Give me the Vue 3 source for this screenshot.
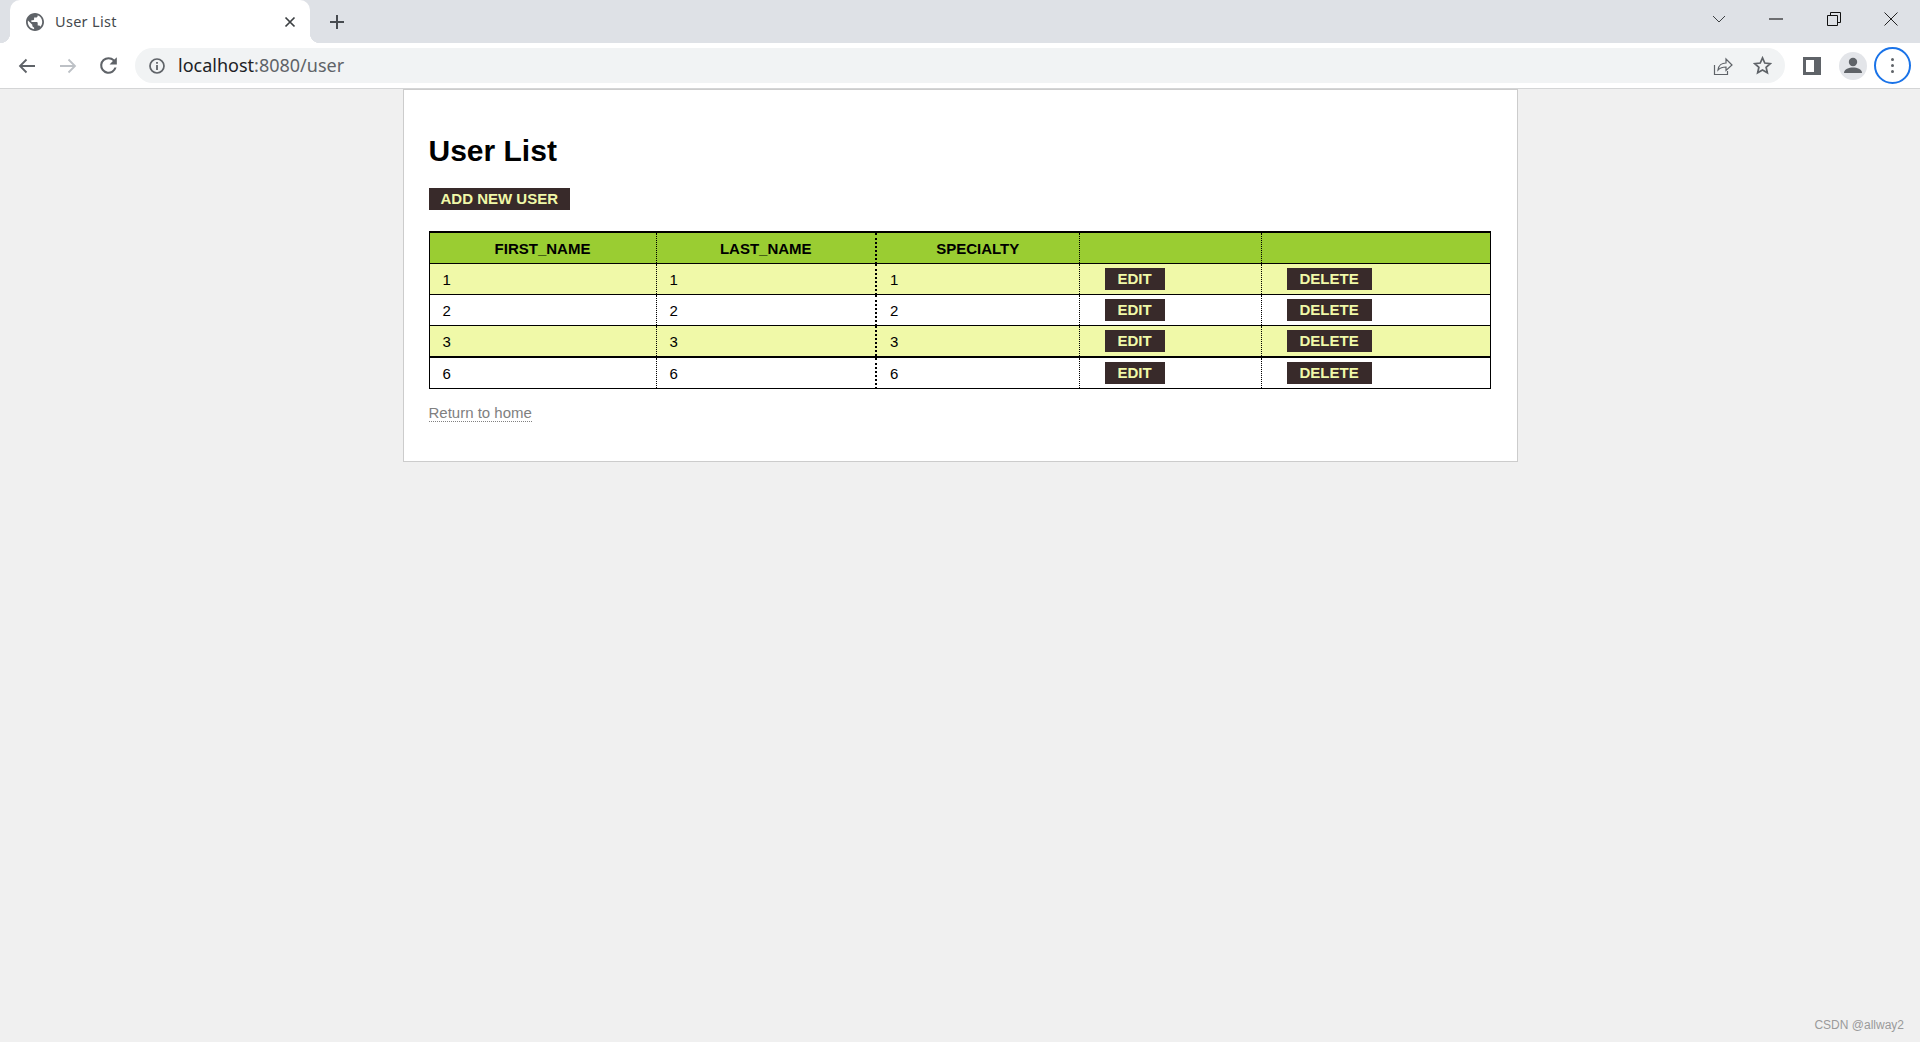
<script setup>
import { ref } from 'vue';

const users = ref([
  { id: 1, firstName: '1', lastName: '1', specialty: '1' },
  { id: 2, firstName: '2', lastName: '2', specialty: '2' },
  { id: 3, firstName: '3', lastName: '3', specialty: '3' },
  { id: 6, firstName: '6', lastName: '6', specialty: '6' }
]);
</script>

<template>
  <div class="page">
    <!-- browser frame -->
    <div class="tabstrip">
      <div class="tab">
        <svg class="favicon" viewBox="2 2 20 20" width="18" height="18">
          <path fill="#5f6368" d="M12 2C6.48 2 2 6.48 2 12s4.48 10 10 10 10-4.48 10-10S17.52 2 12 2zm-1 17.93c-3.95-.49-7-3.85-7-7.93 0-.62.08-1.21.21-1.79L9 15v1c0 1.1.9 2 2 2v1.93zm6.9-2.54c-.26-.81-1-1.39-1.9-1.39h-1v-3c0-.55-.45-1-1-1H8v-2h2c.55 0 1-.45 1-1V7h2c1.1 0 2-.9 2-2v-.41c2.93 1.19 5 4.06 5 7.41 0 2.08-.8 3.97-2.1 5.39z"/>
        </svg>
        <span class="tab-title">User List</span>
        <svg class="tab-close" viewBox="0 0 12 12" width="12" height="12">
          <path d="M1.5 1.5l9 9M10.5 1.5l-9 9" stroke="#3c4043" stroke-width="1.7" fill="none"/>
        </svg>
      </div>
      <svg class="new-tab" viewBox="0 0 16 16" width="16" height="16">
        <path d="M8 1v14M1 8h14" stroke="#474b50" stroke-width="2" fill="none"/>
      </svg>
      <div class="window-controls">
        <div class="win-btn">
          <svg viewBox="0 0 14 8" width="14" height="8"><path d="M1 1l6 6 6-6" stroke="#3c4043" stroke-width="1" fill="none"/></svg>
        </div>
        <div class="win-btn">
          <svg viewBox="0 0 14 2" width="14" height="2"><path d="M0 1h14" stroke="#111" stroke-width="1.1" fill="none"/></svg>
        </div>
        <div class="win-btn">
          <svg viewBox="0 0 14 14" width="14" height="14"><path d="M.5 3.5h10v10H.5zM3.5 3.5V.5h10v10h-3" stroke="#111" stroke-width="1" fill="none"/></svg>
        </div>
        <div class="win-btn">
          <svg viewBox="0 0 14 14" width="14" height="14"><path d="M.5.5l13 13M13.5.5l-13 13" stroke="#222" stroke-width="1" fill="none"/></svg>
        </div>
      </div>
    </div>

    <div class="toolbar">
      <div class="nav-btn back">
        <svg viewBox="0 0 18 16" width="18" height="16"><path d="M17 8H2M8.5 1.5L2 8l6.5 6.5" stroke="#5f6368" stroke-width="1.8" fill="none"/></svg>
      </div>
      <div class="nav-btn">
        <svg viewBox="0 0 18 16" width="18" height="16"><path d="M1 8h15M9.5 1.5L16 8l-6.500 6.500" stroke="#bdc1c6" stroke-width="1.8" fill="none"/></svg>
      </div>
      <div class="nav-btn">
        <svg viewBox="0 0 24 24" width="25" height="25"><path fill="#5f6368" d="M17.65 6.35A7.96 7.96 0 0 0 12 4a8 8 0 1 0 7.73 10h-2.08A6 6 0 1 1 12 6c1.66 0 3.14.69 4.22 1.78L13 11h7V4l-2.35 2.35z"/></svg>
      </div>
      <div class="omnibox">
        <svg class="info" viewBox="0 0 16 16" width="16" height="16">
          <circle cx="8" cy="8" r="7" stroke="#5f6368" stroke-width="1.7" fill="none"/>
          <path d="M8 7v5M8 4v1.8" stroke="#5f6368" stroke-width="1.8" fill="none"/>
        </svg>
        <span class="url"><span class="host">localhost</span>:8080/user</span>
        <svg class="share" viewBox="0 0 20 20" width="20" height="20">
          <path d="M1.5 9v9.5h13V15M5 14c.5-4.500 4-7 8-7V3l6 6-6 5.500V11c-3.500 0-6 1-8 3z" stroke="#5f6368" stroke-width="1.2" fill="none"/>
        </svg>
        <svg class="star" viewBox="0 0 20 20" width="19" height="19">
          <path d="M10 2l2.4 5.400 5.800.6-4.400 3.900 1.300 5.700L10 14.700l-5.100 2.900 1.300-5.700L1.800 8l5.800-.6z" stroke="#5f6368" stroke-width="1.8" fill="none"/>
        </svg>
      </div>
      <svg class="sidebar-icon" viewBox="0 0 18 18" width="18" height="18">
        <path fill="#5f6368" fill-rule="evenodd" d="M0 0h18v18H0zM3 3v12h8V3z"/>
      </svg>
      <div class="avatar">
        <svg viewBox="0 0 20 20" width="20" height="20">
          <circle cx="10" cy="6" r="4.2" fill="#5f6368"/>
          <path fill="#5f6368" d="M1 17c0-4 5-5.500 9-5.500s9 1.500 9 5.500z"/>
        </svg>
      </div>
      <div class="menu-btn">
        <span class="dot"></span><span class="dot"></span><span class="dot"></span>
      </div>
    </div>

    <!-- page content -->
    <div class="content-box">
      <h1 class="page-title">User List</h1>
      <a class="btn add-btn">ADD NEW USER</a>

      <table class="user-table">
        <colgroup>
          <col class="col-first">
          <col class="col-last">
          <col class="col-spec">
          <col class="col-edit">
          <col class="col-del">
        </colgroup>
        <thead>
          <tr>
            <th>FIRST_NAME</th>
            <th>LAST_NAME</th>
            <th>SPECIALTY</th>
            <th></th>
            <th></th>
          </tr>
        </thead>
        <tbody>
          <tr v-for="user in users" :key="user.id">
            <td>{{ user.firstName }}</td>
            <td>{{ user.lastName }}</td>
            <td>{{ user.specialty }}</td>
            <td class="action"><a class="btn">EDIT</a></td>
            <td class="action"><a class="btn">DELETE</a></td>
          </tr>
        </tbody>
      </table>

      <a class="home-link">Return to home</a>
    </div>

    <div class="watermark">CSDN @allway2</div>
  </div>
</template>

<style>
html, body {
  margin: 0;
  background: #f0f0f0;
}
</style>

<style scoped>
.page {
  height: 1042px;
  overflow: hidden;
  background: #f0f0f0;
  font-family: "Liberation Sans", Arial, sans-serif;
  position: relative;
}

/* browser frame */
.tabstrip {
  height: 43px;
  background: #dee1e6;
  display: flex;
  align-items: center;
  padding-left: 10px;
}

.tab {
  width: 300px;
  height: 43px;
  box-sizing: border-box;
  background: #fff;
  border-radius: 10px 10px 0 0;
  display: flex;
  align-items: center;
  padding: 0 14px 0 16px;
  position: relative;
}

.tab::before,
.tab::after {
  content: "";
  position: absolute;
  bottom: 0;
  width: 10px;
  height: 10px;
}

.tab::before {
  left: -10px;
  background: radial-gradient(circle at 0 0, transparent 10px, #fff 10.5px);
}

.tab::after {
  right: -10px;
  background: radial-gradient(circle at 100% 0, transparent 10px, #fff 10.5px);
}

.tab-title {
  margin-left: 11px;
  margin-bottom: 1px;
  font-family: "Noto Sans", sans-serif;
  font-size: 14.5px;
  letter-spacing: 0.3px;
  color: #45494d;
}

.tab-close {
  margin-left: auto;
}

.new-tab {
  margin-left: 19px;
}

.window-controls {
  margin-left: auto;
  align-self: flex-start;
  display: flex;
}

.win-btn {
  width: 57.5px;
  height: 38px;
  display: flex;
  align-items: center;
  justify-content: center;
}

.toolbar {
  height: 45px;
  background: #fff;
  border-bottom: 1px solid #d4d5d6;
  display: flex;
  align-items: center;
  padding-left: 6px;
}

.nav-btn {
  width: 40px;
  display: flex;
  justify-content: center;
}

.nav-btn.back {
  width: 42px;
}

.omnibox {
  width: 1650px;
  height: 35px;
  margin-left: 7px;
  background: #f1f3f4;
  border-radius: 18px;
  display: flex;
  align-items: center;
  padding-left: 14px;
  box-sizing: border-box;
}

.url {
  margin-left: 13px;
  margin-bottom: 2px;
  font-family: "Noto Sans", sans-serif;
  font-size: 18px;
  color: #5f6368;
}

.host {
  color: #202124;
}

.share {
  margin-left: auto;
}

.star {
  margin-left: 20px;
  margin-right: 13px;
}

.sidebar-icon {
  margin-left: 18px;
}

.avatar {
  width: 28px;
  height: 28px;
  margin-left: 18px;
  border-radius: 50%;
  background: #e3e5e9;
  display: flex;
  align-items: center;
  justify-content: center;
}

.menu-btn {
  width: 37px;
  height: 37px;
  box-sizing: border-box;
  margin-left: 7px;
  border: 2px solid #1a73e8;
  border-radius: 50%;
  display: flex;
  flex-direction: column;
  align-items: center;
  justify-content: center;
  gap: 2.5px;
}

.dot {
  width: 3.5px;
  height: 3.5px;
  border-radius: 50%;
  background: #5f6368;
}

/* page content */
.content-box {
  width: 1115px;
  height: 373px;
  box-sizing: border-box;
  margin: 0 auto;
  background: #fff;
  border: 1px solid #ccc;
  padding: 46px 26px 0 25px;
}

.page-title {
  margin: 0 0 22px;
  font-size: 30px;
  line-height: 30px;
  font-weight: 700;
  color: #000;
}

.btn {
  display: inline-block;
  background: #382a2a;
  color: #f0f9a8;
  font-size: 15px;
  font-weight: 700;
  line-height: 22px;
  padding: 0 13px;
}

.add-btn {
  display: block;
  width: fit-content;
  padding: 0 12px;
}

.user-table {
  width: 1061px;
  margin-top: 21px;
  border-collapse: collapse;
  table-layout: fixed;
  border: 1px solid #000;
  border-top-width: 2px;
  font-size: 15px;
  color: #000;
}

.col-first { width: 227px; }
.col-last { width: 220px; }
.col-spec { width: 203px; }
.col-edit { width: 182px; }
.col-del { width: 229px; }

.user-table th {
  height: 30px;
  padding: 0;
  background: #9acd32;
  font-size: 15px;
  font-weight: 700;
  text-align: center;
  border-bottom: 1px solid #000;
  border-right: 1px dotted #000;
}

.user-table td {
  height: 30px;
  padding: 0 13px;
  border-bottom: 1px solid #000;
  border-right: 1px dotted #000;
}

.user-table td.action {
  padding-left: 25px;
}

.user-table th:nth-child(2),
.user-table td:nth-child(2) {
  border-right: 2px dotted #000;
}

.user-table th:last-child,
.user-table td:last-child {
  border-right: 1px solid #000;
}

.user-table tbody tr:nth-child(odd) td {
  background: #f0f9a8;
}

.user-table tbody tr:nth-child(3) td {
  border-bottom: 2px solid #000;
}

.home-link {
  display: inline-block;
  margin-top: 15px;
  font-size: 15px;
  line-height: 17px;
  color: #808080;
  border-bottom: 1px dotted #808080;
}

.watermark {
  position: absolute;
  right: 16px;
  bottom: 10px;
  font-size: 12px;
  color: #9a9a9a;
}
</style>
